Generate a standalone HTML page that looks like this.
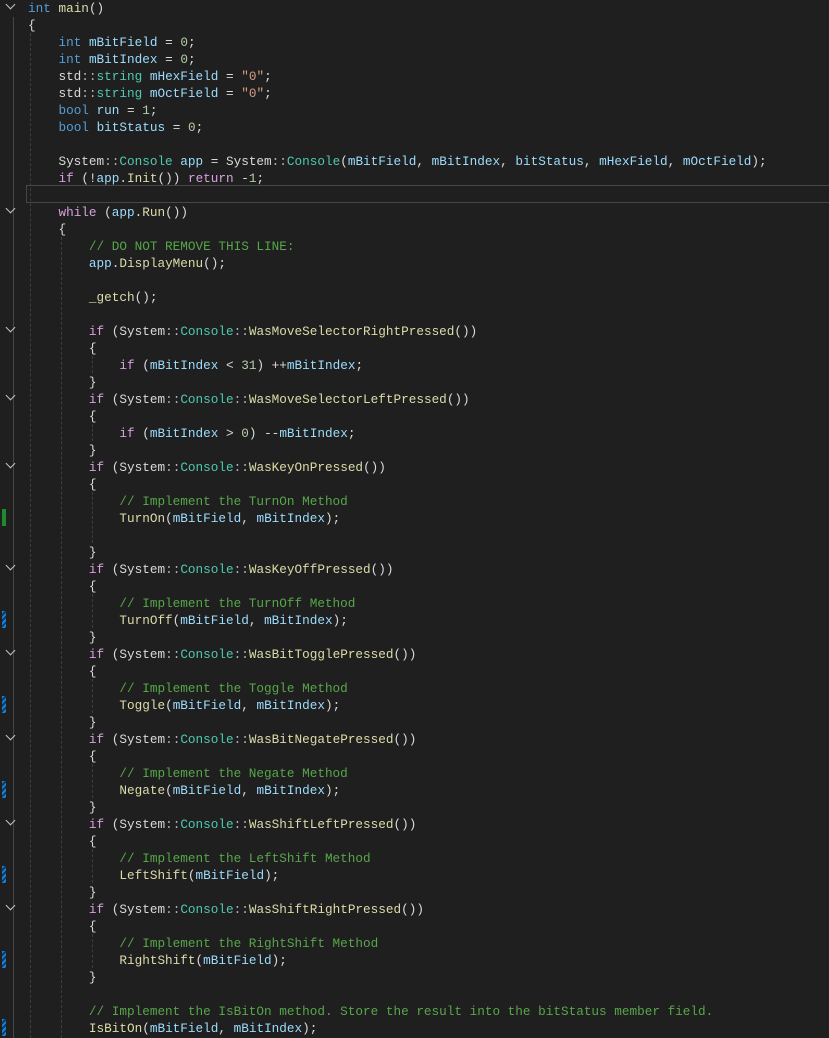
<!DOCTYPE html>
<html><head><meta charset="utf-8"><style>
html,body{margin:0;padding:0;background:#1f1f1f;width:829px;height:1038px;overflow:hidden}
#ed{position:relative;width:829px;height:1038px;font-family:"Liberation Mono",monospace;font-size:12.7px;color:#dadada}
.l{position:absolute;left:28px;height:17px;line-height:17px;white-space:pre;margin-top:1px}
.k{color:#569cd6}.c{color:#d8a0df}.t{color:#4ec9b0}.f{color:#dcdcaa}.v{color:#9cdcfe}.n{color:#b5cea8}.s{color:#d69d85}.m{color:#57a64a}.p{color:#b4b4b4}
.g{position:absolute;border-left:1px dashed #3e3e3e;width:0}
.fl{position:absolute;left:13px;width:1px;background:#464646}
.chev{position:absolute;left:7px;width:6px;height:6px;border-right:1.5px solid #c5c5c5;border-bottom:1.5px solid #c5c5c5;transform:rotate(45deg)}
.cb{position:absolute;left:2px;width:4px;height:17px;background:repeating-linear-gradient(135deg,#1b81d0 0 2px,#0a3a66 2px 4px)}
</style></head><body><div id="ed">
<div class="fl" style="top:17px;height:1021px"></div>
<div class="g" style="left:30px;top:33px;height:1005px"></div>
<div class="g" style="left:61px;top:237px;height:801px"></div>
<div class="g" style="left:92px;top:356px;height:17px"></div>
<div class="g" style="left:92px;top:424px;height:17px"></div>
<div class="g" style="left:92px;top:492px;height:51px"></div>
<div class="g" style="left:92px;top:594px;height:34px"></div>
<div class="g" style="left:92px;top:679px;height:34px"></div>
<div class="g" style="left:92px;top:764px;height:34px"></div>
<div class="g" style="left:92px;top:849px;height:34px"></div>
<div class="g" style="left:92px;top:934px;height:34px"></div>
<div style="position:absolute;left:26px;top:185px;width:810px;height:16px;border:1px solid #464646;border-right:none"></div>
<div style="position:absolute;left:2px;top:509px;width:4px;height:17px;background:#1e8a2b"></div>
<div class="cb" style="top:611px"></div><div class="cb" style="top:696px"></div><div class="cb" style="top:781px"></div><div class="cb" style="top:866px"></div><div class="cb" style="top:951px"></div><div class="cb" style="top:1019px"></div>
<div class="chev" style="top:1px"></div><div class="chev" style="top:205px"></div><div class="chev" style="top:324px"></div><div class="chev" style="top:392px"></div><div class="chev" style="top:460px"></div><div class="chev" style="top:562px"></div><div class="chev" style="top:647px"></div><div class="chev" style="top:732px"></div><div class="chev" style="top:817px"></div><div class="chev" style="top:902px"></div>
<div class="l" style="top:-1px"><span class="k">int</span> <span class="f">main</span>()</div>
<div class="l" style="top:16px">{</div>
<div class="l" style="top:33px">    <span class="k">int</span> <span class="v">mBitField</span> = <span class="n">0</span>;</div>
<div class="l" style="top:50px">    <span class="k">int</span> <span class="v">mBitIndex</span> = <span class="n">0</span>;</div>
<div class="l" style="top:67px">    std<span class="p">::</span><span class="t">string</span> <span class="v">mHexField</span> = <span class="s">"0"</span>;</div>
<div class="l" style="top:84px">    std<span class="p">::</span><span class="t">string</span> <span class="v">mOctField</span> = <span class="s">"0"</span>;</div>
<div class="l" style="top:101px">    <span class="k">bool</span> <span class="v">run</span> = <span class="n">1</span>;</div>
<div class="l" style="top:118px">    <span class="k">bool</span> <span class="v">bitStatus</span> = <span class="n">0</span>;</div>
<div class="l" style="top:152px">    System<span class="p">::</span><span class="t">Console</span> <span class="v">app</span> = System<span class="p">::</span><span class="t">Console</span>(<span class="v">mBitField</span>, <span class="v">mBitIndex</span>, <span class="v">bitStatus</span>, <span class="v">mHexField</span>, <span class="v">mOctField</span>);</div>
<div class="l" style="top:169px">    <span class="c">if</span> (!<span class="v">app</span>.<span class="f">Init</span>()) <span class="c">return</span> -<span class="n">1</span>;</div>
<div class="l" style="top:203px">    <span class="c">while</span> (<span class="v">app</span>.<span class="f">Run</span>())</div>
<div class="l" style="top:220px">    {</div>
<div class="l" style="top:237px">        <span class="m">// DO NOT REMOVE THIS LINE:</span></div>
<div class="l" style="top:254px">        <span class="v">app</span>.<span class="f">DisplayMenu</span>();</div>
<div class="l" style="top:288px">        <span class="f">_getch</span>();</div>
<div class="l" style="top:322px">        <span class="c">if</span> (System<span class="p">::</span><span class="t">Console</span><span class="p">::</span><span class="f">WasMoveSelectorRightPressed</span>())</div>
<div class="l" style="top:339px">        {</div>
<div class="l" style="top:356px">            <span class="c">if</span> (<span class="v">mBitIndex</span> &lt; <span class="n">31</span>) ++<span class="v">mBitIndex</span>;</div>
<div class="l" style="top:373px">        }</div>
<div class="l" style="top:390px">        <span class="c">if</span> (System<span class="p">::</span><span class="t">Console</span><span class="p">::</span><span class="f">WasMoveSelectorLeftPressed</span>())</div>
<div class="l" style="top:407px">        {</div>
<div class="l" style="top:424px">            <span class="c">if</span> (<span class="v">mBitIndex</span> &gt; <span class="n">0</span>) --<span class="v">mBitIndex</span>;</div>
<div class="l" style="top:441px">        }</div>
<div class="l" style="top:458px">        <span class="c">if</span> (System<span class="p">::</span><span class="t">Console</span><span class="p">::</span><span class="f">WasKeyOnPressed</span>())</div>
<div class="l" style="top:475px">        {</div>
<div class="l" style="top:492px">            <span class="m">// Implement the TurnOn Method</span></div>
<div class="l" style="top:509px">            <span class="f">TurnOn</span>(<span class="v">mBitField</span>, <span class="v">mBitIndex</span>);</div>
<div class="l" style="top:543px">        }</div>
<div class="l" style="top:560px">        <span class="c">if</span> (System<span class="p">::</span><span class="t">Console</span><span class="p">::</span><span class="f">WasKeyOffPressed</span>())</div>
<div class="l" style="top:577px">        {</div>
<div class="l" style="top:594px">            <span class="m">// Implement the TurnOff Method</span></div>
<div class="l" style="top:611px">            <span class="f">TurnOff</span>(<span class="v">mBitField</span>, <span class="v">mBitIndex</span>);</div>
<div class="l" style="top:628px">        }</div>
<div class="l" style="top:645px">        <span class="c">if</span> (System<span class="p">::</span><span class="t">Console</span><span class="p">::</span><span class="f">WasBitTogglePressed</span>())</div>
<div class="l" style="top:662px">        {</div>
<div class="l" style="top:679px">            <span class="m">// Implement the Toggle Method</span></div>
<div class="l" style="top:696px">            <span class="f">Toggle</span>(<span class="v">mBitField</span>, <span class="v">mBitIndex</span>);</div>
<div class="l" style="top:713px">        }</div>
<div class="l" style="top:730px">        <span class="c">if</span> (System<span class="p">::</span><span class="t">Console</span><span class="p">::</span><span class="f">WasBitNegatePressed</span>())</div>
<div class="l" style="top:747px">        {</div>
<div class="l" style="top:764px">            <span class="m">// Implement the Negate Method</span></div>
<div class="l" style="top:781px">            <span class="f">Negate</span>(<span class="v">mBitField</span>, <span class="v">mBitIndex</span>);</div>
<div class="l" style="top:798px">        }</div>
<div class="l" style="top:815px">        <span class="c">if</span> (System<span class="p">::</span><span class="t">Console</span><span class="p">::</span><span class="f">WasShiftLeftPressed</span>())</div>
<div class="l" style="top:832px">        {</div>
<div class="l" style="top:849px">            <span class="m">// Implement the LeftShift Method</span></div>
<div class="l" style="top:866px">            <span class="f">LeftShift</span>(<span class="v">mBitField</span>);</div>
<div class="l" style="top:883px">        }</div>
<div class="l" style="top:900px">        <span class="c">if</span> (System<span class="p">::</span><span class="t">Console</span><span class="p">::</span><span class="f">WasShiftRightPressed</span>())</div>
<div class="l" style="top:917px">        {</div>
<div class="l" style="top:934px">            <span class="m">// Implement the RightShift Method</span></div>
<div class="l" style="top:951px">            <span class="f">RightShift</span>(<span class="v">mBitField</span>);</div>
<div class="l" style="top:968px">        }</div>
<div class="l" style="top:1002px">        <span class="m">// Implement the IsBitOn method. Store the result into the bitStatus member field.</span></div>
<div class="l" style="top:1019px">        <span class="f">IsBitOn</span>(<span class="v">mBitField</span>, <span class="v">mBitIndex</span>);</div>
</div></body></html>
